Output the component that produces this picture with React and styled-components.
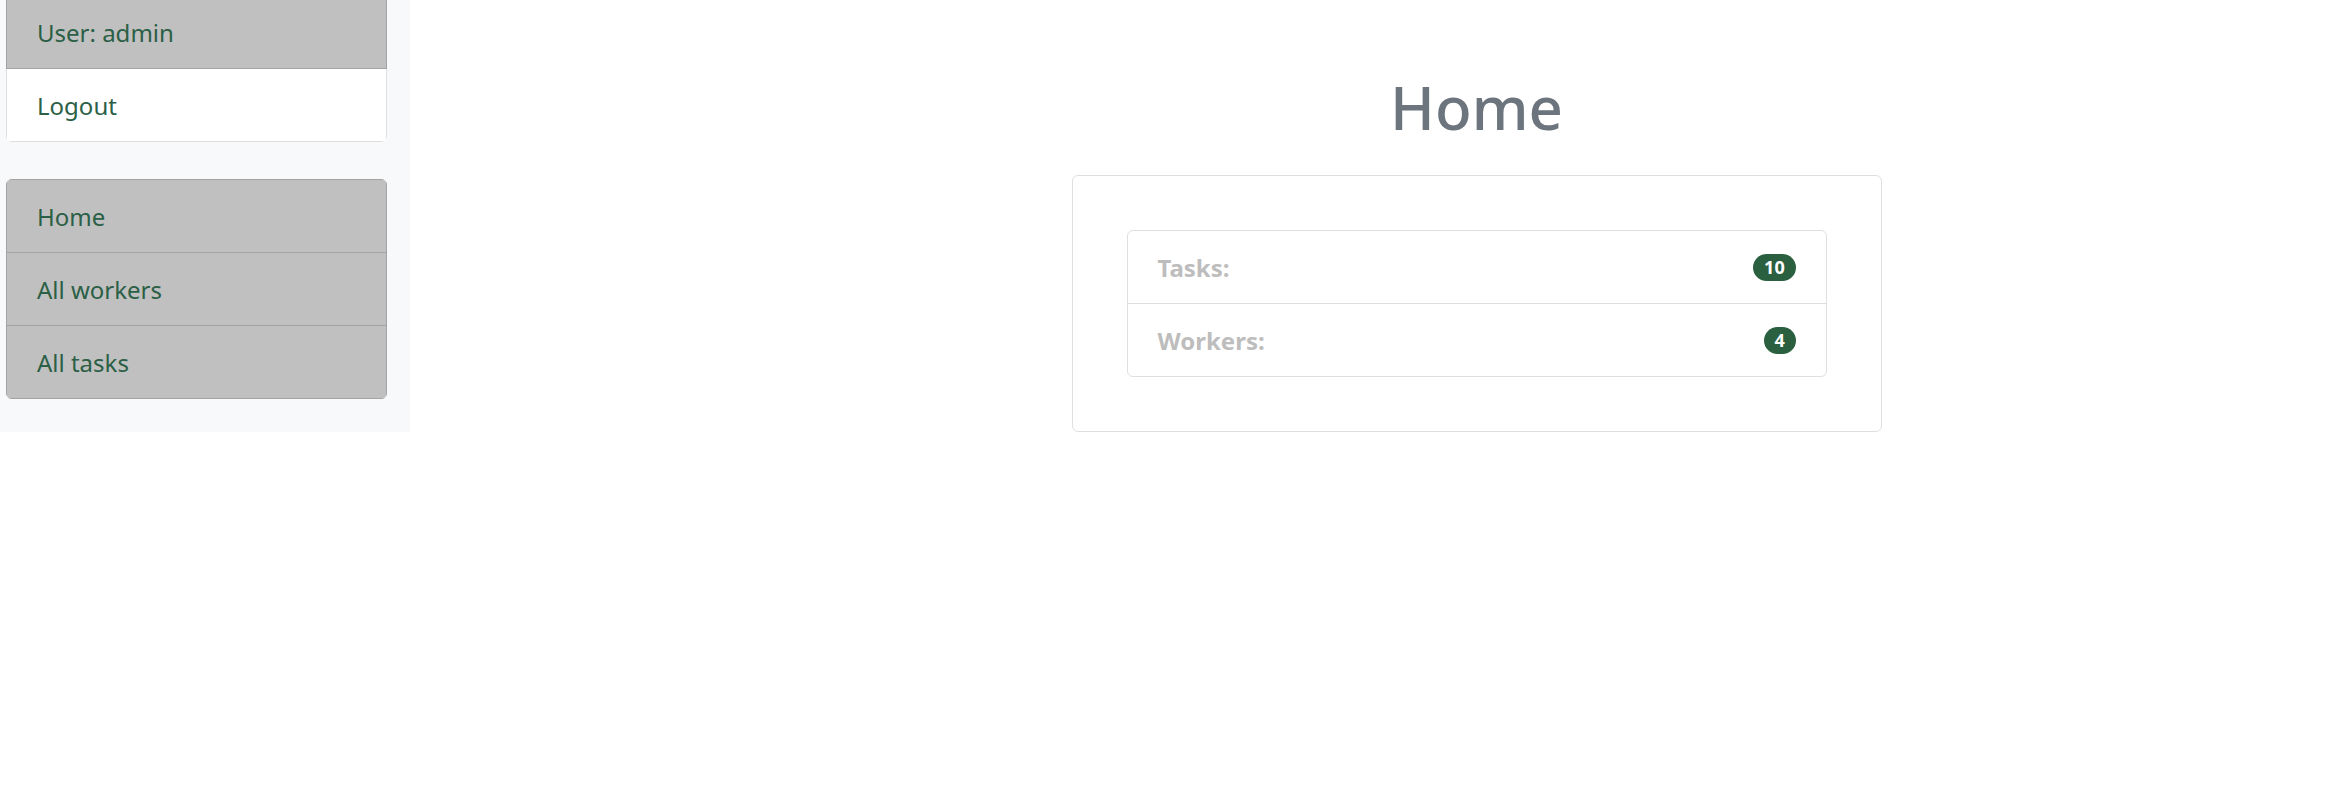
import styled, { createGlobalStyle } from "styled-components"

const GlobalStyle = createGlobalStyle`
    body {
        margin: 0;
        background: #fff;
        font-family: "Noto Sans", "Open Sans", Arial, sans-serif;
    }
`
const Page = styled.div`
    display: flex;
    align-items: flex-start;
    width: 100%;
`
const Sidebar = styled.aside`
    width: 410px;
    height: 432px;
    box-sizing: border-box;
    background-color: #f8f9fa;
    padding: 0 23px 0 6px;
    display: flex;
    flex-direction: column;
    gap: 37px;
`
const ListGroup = styled.ul`
    list-style: none;
    margin: ${props => props.$shift || 0}px 0 0 0;
    padding: 0;
    border-radius: 6px;
    overflow: hidden;
`
const ListItem = styled.li`
    font-size: 24px;
    line-height: 36px;
    padding: 19px 30px 17px;
    color: #2b5f46;
    background-color: ${props => props.$light ? "#fff" : "#c0c0c0"};
    border: 1px solid ${props => props.$light ? "#dfdfdf" : "#a3a3a3"};
    & + & {
        border-top-width: 0;
    }
`
const Main = styled.main`
    flex: 1;
    padding-left: 212px;
    display: flex;
    flex-direction: column;
    align-items: center;
`
const Title = styled.h1`
    font-size: 60px;
    font-weight: 500;
    line-height: 72px;
    color: #6c757d;
    margin: 71px 0 32px 0;
`
const Card = styled.div`
    width: 810px;
    box-sizing: border-box;
    padding: 54px;
    border: 1px solid #dfdfdf;
    border-radius: 6px;
`
const StatList = styled.div`
    border: 1px solid #dfdfdf;
    border-radius: 6px;
`
const StatRow = styled.div`
    display: flex;
    align-items: center;
    justify-content: space-between;
    padding: 19px 30px 17px;
    line-height: 36px;
    & + & {
        border-top: 1px solid #dfdfdf;
    }
`
const Label = styled.span`
    font-size: 24px;
    font-weight: 700;
    color: #bdbdbd;
`
const Badge = styled.span`
    font-size: 18px;
    font-weight: 700;
    line-height: 1;
    color: #fff;
    background-color: #2a603f;
    padding: 4.5px 10.8px;
    border-radius: 15px;
    margin-top: -2px;
`

function App() {
    return (
        <>
            <GlobalStyle />
            <Page>
                <Sidebar>
                    <ListGroup $shift={-5}>
                        <ListItem>User: admin</ListItem>
                        <ListItem $light>Logout</ListItem>
                    </ListGroup>
                    <ListGroup>
                        <ListItem>Home</ListItem>
                        <ListItem>All workers</ListItem>
                        <ListItem>All tasks</ListItem>
                    </ListGroup>
                </Sidebar>
                <Main>
                    <Title>Home</Title>
                    <Card>
                        <StatList>
                            <StatRow>
                                <Label>Tasks:</Label>
                                <Badge>10</Badge>
                            </StatRow>
                            <StatRow>
                                <Label>Workers:</Label>
                                <Badge>4</Badge>
                            </StatRow>
                        </StatList>
                    </Card>
                </Main>
            </Page>
        </>
    )
}
export default App
